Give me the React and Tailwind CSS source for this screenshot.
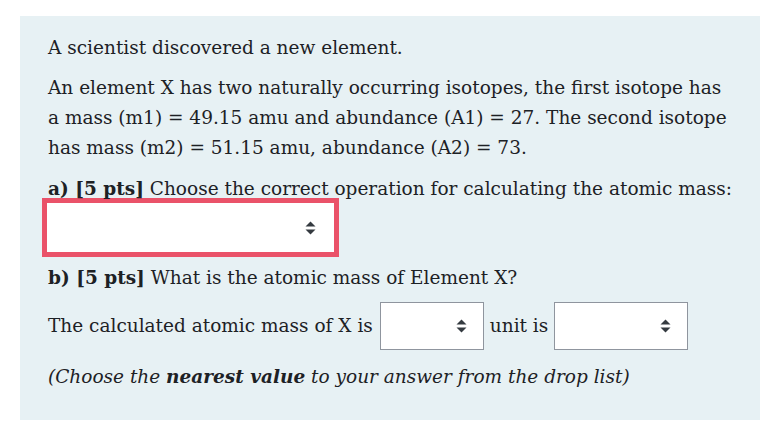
import React from "react";

const Arrows = () => (
  <svg width="11" height="14" viewBox="0 0 11 14" className="shrink-0">
    <path d="M5.5 0.5 L10.5 5.5 L0.5 5.5 Z" fill="#343a40" />
    <path d="M5.5 13.5 L10.5 8.5 L0.5 8.5 Z" fill="#343a40" />
  </svg>
);

const Select = ({ className }) => (
  <div className={`flex shrink-0 items-center justify-end bg-white ${className}`}>
    <Arrows />
  </div>
);

export default function App() {
  return (
    <div className="w-[761px] h-[448px] bg-white pt-4 pl-5 text-[18.5px] text-[#1d2125]" style={{ fontFamily: '"DejaVu Serif", "Liberation Serif", serif' }}>
      <div className="w-[740px] bg-[#e7f1f4] pl-7 pr-[30px] pt-[17px] pb-[28px]">
        <p className="leading-[30px]">A scientist discovered a new element.</p>
        <p className="mt-[10px] leading-[30px]">
          An element X has two naturally occurring isotopes, the first isotope has a mass (m1) = 49.15 amu and abundance (A1) = 27. The second isotope has mass (m2) = 51.15 amu, abundance (A2) = 73.
        </p>
        <p className="mt-[14px] leading-[24px] whitespace-nowrap">
          <span className="font-bold">a) [5 pts]</span> Choose the correct operation for calculating the atomic mass:
        </p>
        <Select className="-ml-[6px] -mt-[3px] h-[59px] w-[297px] border-[5px] border-[#ea5269] pr-[18px]" />
        <p className="mt-[6px] leading-[30px]">
          <span className="font-bold">b) [5 pts]</span> What is the atomic mass of Element X?
        </p>
        <div className="mt-[9px] flex h-[48px] items-center whitespace-nowrap">
          <span>The calculated atomic mass of X is</span>
          <Select className="ml-[7px] h-[48px] w-[104px] border border-[#8f959e] pr-4" />
          <span className="ml-[6px]">unit is</span>
          <Select className="ml-[6px] h-[48px] w-[134px] border border-[#8f959e] pr-4" />
        </div>
        <p className="mt-[12px] leading-[30px] italic">
          (Choose the <span className="font-bold">nearest value</span> to your answer from the drop list)
        </p>
      </div>
    </div>
  );
}
